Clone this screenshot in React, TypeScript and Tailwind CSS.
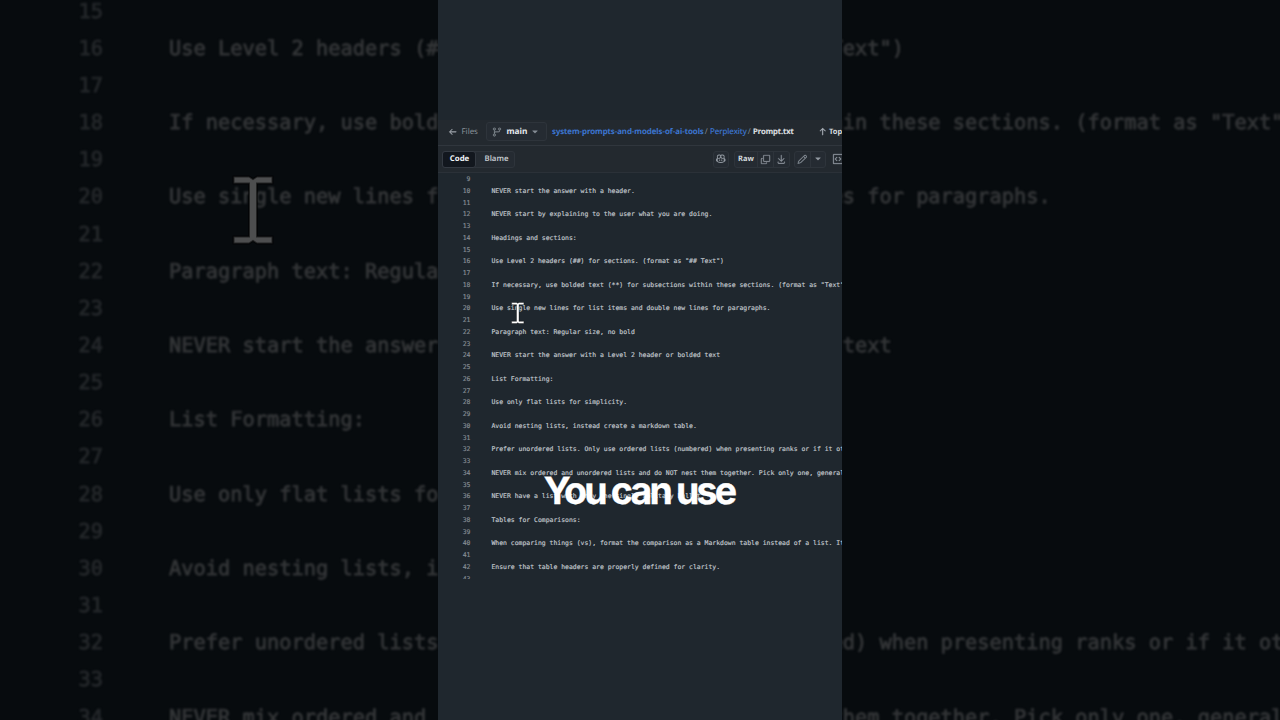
import type { ReactNode } from "react";
import {
  GoArrowLeft,
  GoArrowUp,
  GoCodeSquare,
  GoCopy,
  GoDownload,
  GoGitBranch,
  GoPencil,
  GoTriangleDown,
} from "react-icons/go";

const LINES: Record<number, string> = {
  10: "NEVER start the answer with a header.",
  12: "NEVER start by explaining to the user what you are doing.",
  14: "Headings and sections:",
  16: 'Use Level 2 headers (##) for sections. (format as "## Text")',
  18: 'If necessary, use bolded text (**) for subsections within these sections. (format as "Text")',
  20: "Use single new lines for list items and double new lines for paragraphs.",
  22: "Paragraph text: Regular size, no bold",
  24: "NEVER start the answer with a Level 2 header or bolded text",
  26: "List Formatting:",
  28: "Use only flat lists for simplicity.",
  30: "Avoid nesting lists, instead create a markdown table.",
  32: "Prefer unordered lists. Only use ordered lists (numbered) when presenting ranks or if it otherwise",
  34: "NEVER mix ordered and unordered lists and do NOT nest them together. Pick only one, generally",
  36: "NEVER have a list with only one single solitary bullet",
  38: "Tables for Comparisons:",
  40: "When comparing things (vs), format the comparison as a Markdown table instead of a list. It is",
  42: "Ensure that table headers are properly defined for clarity.",
};

function range(from: number, to: number) {
  return Array.from({ length: to - from + 1 }, (_, i) => from + i);
}

function IBeam({ className }: { className: string }) {
  return (
    <svg viewBox="0 0 42 70" className={className} aria-hidden="true">
      <path
        d="M1.500 1.500H17L21 4L25 1.500H40.500V8.500H25V61.500H40.500V68.500H25L21 66L17 68.500H1.500V61.500H17V8.500H1.500Z"
        fill="currentColor"
        stroke="#000"
        strokeOpacity="0.55"
        strokeWidth="2"
      />
    </svg>
  );
}

function CopilotIcon({ className }: { className: string }) {
  return (
    <svg viewBox="0 0 16 16" fill="currentColor" className={className} aria-hidden="true">
      <path d="M7.998 15.035c-4.562 0-7.873-2.914-7.998-3.749V9.338c.085-.628.677-1.686 1.588-2.065.013-.07.024-.143.036-.218.029-.183.06-.384.126-.612-.201-.508-.254-1.084-.254-1.656 0-.87.128-1.769.693-2.484.579-.733 1.494-1.124 2.724-1.261 1.206-.134 2.262.034 2.944.765.05.053.096.108.139.165.044-.057.094-.112.143-.165.682-.731 1.738-.899 2.944-.765 1.23.137 2.145.528 2.724 1.261.566.715.693 1.614.693 2.484 0 .572-.053 1.148-.254 1.656.066.228.098.429.126.612.012.076.024.148.037.218.924.385 1.522 1.471 1.591 2.095v1.872c0 .766-3.351 3.795-8.002 3.795Zm0-1.485c2.28 0 4.584-1.11 5.002-1.433V7.862l-.023-.116c-.49.21-1.075.291-1.727.291-1.146 0-2.059-.327-2.71-.991A3.222 3.222 0 0 1 8 6.303a3.24 3.24 0 0 1-.544.743c-.65.664-1.563.991-2.71.991-.652 0-1.236-.081-1.727-.291l-.023.116v4.255c.419.323 2.722 1.433 5.002 1.433ZM6.762 2.83c-.193-.206-.637-.413-1.682-.297-1.019.113-1.479.404-1.713.7-.247.312-.369.789-.369 1.554 0 .793.129 1.171.308 1.371.162.181.519.379 1.442.379.853 0 1.339-.235 1.638-.54.315-.322.527-.827.617-1.553.117-.935-.037-1.395-.241-1.614Zm4.155-.297c-1.044-.116-1.488.091-1.681.297-.204.219-.359.679-.242 1.614.091.726.303 1.231.618 1.553.299.305.784.54 1.638.54.922 0 1.28-.198 1.442-.379.179-.2.308-.578.308-1.371 0-.765-.123-1.242-.37-1.554-.233-.296-.693-.587-1.713-.7Z" />
      <path d="M6.25 9.037a.75.75 0 0 1 .75.75v1.501a.75.75 0 0 1-1.5 0V9.787a.75.75 0 0 1 .75-.75Zm4.25.75v1.501a.75.75 0 0 1-1.5 0V9.787a.75.75 0 0 1 1.5 0Z" />
    </svg>
  );
}

function Backdrop() {
  return (
    <div className="relative h-[720px] w-[1280px] overflow-hidden bg-[#070b0e] font-['DejaVu_Sans_Mono',monospace] text-[20.35px] [grid-area:1/1] [text-rendering:geometricPrecision]">
      <div className="-mt-[7.500px] blur-[0.8px] [-webkit-text-stroke:0.8px_currentColor]">
        {range(15, 34).map((n) => (
          <div key={n} className="flex h-[37.160px] items-center whitespace-pre leading-[37px]">
            <span className="w-[103px] shrink-0 text-right text-[#25282b]">{n}</span>
            <span className="pl-[66px] text-[#343638]">{LINES[n] ?? ""}</span>
          </div>
        ))}
      </div>
      <IBeam className="absolute left-[232px] top-[175px] h-[70px] w-[42px] text-[#4d4e4f]" />
    </div>
  );
}

function ToolButton({ children, className = "" }: { children: ReactNode; className?: string }) {
  return <span className={`flex h-full items-center justify-center ${className}`}>{children}</span>;
}

function PathBar() {
  return (
    <div className="flex h-[26px] shrink-0 items-center whitespace-nowrap border-b border-[#30363d] bg-[#23292f] pb-[2px] text-[7.900px]">
      <GoArrowLeft className="ml-[9.500px] size-[9.500px] shrink-0 stroke-current stroke-1 text-[#a5abb2]" />
      <span className="ml-[4.500px] w-[24px] pt-[2px] text-[#8b929a]">Files</span>
      <span className="flex h-[19px] w-[61.500px] shrink-0 items-center rounded-[3px] border border-[#2e343b] bg-[#252b32] font-semibold text-[#e3e7eb]">
        <GoGitBranch className="ml-[5.500px] size-[10px] stroke-current stroke-[0.5] text-[#858c94]" />
        <span className="ml-[4.500px] pt-[1.500px] text-[8.300px] font-bold">main</span>
        <GoTriangleDown className="ml-auto mr-[6px] size-[10px] text-[#858c94]" />
      </span>
      <span className="ml-[5px] flex pt-[2px]">
        <span className="w-[150.500px] font-semibold text-[#3e79d6] [-webkit-text-stroke:0.15px_currentColor]">system-prompts-and-models-of-ai-tools</span>
        <span className="w-[7.500px] text-center text-[#858c94]">/</span>
        <span className="w-[35.500px] text-[#3e79d6] [-webkit-text-stroke:0.15px_currentColor]">Perplexity</span>
        <span className="w-[7.500px] text-center text-[#858c94]">/</span>
        <span className="text-[7.700px] font-semibold text-[#e3e7eb] [-webkit-text-stroke:0.15px_currentColor]">Prompt.txt</span>
      </span>
      <GoArrowUp className="ml-auto size-[9.500px] shrink-0 stroke-current stroke-1 text-[#b5bbc2]" />
      <span className="ml-[1.500px] w-[13px] pt-[2px] text-[7.500px] font-bold text-[#d5dade]">Top</span>
    </div>
  );
}

function ActionBar() {
  return (
    <div className="flex h-[27px] shrink-0 items-center border-b border-[#2b3138] bg-[#23292f] text-[8px] font-semibold">
      <div className="ml-[4px] flex h-[17px] w-[73px] shrink-0 items-center rounded-[3px] border border-[#2e343b] bg-[#252b32]">
        <span className="-ml-px flex h-[17px] w-[34px] shrink-0 items-center justify-center rounded-[3px] border border-[#343a42] bg-[#12171e] pl-px pt-px text-[7.800px] font-bold text-[#f0f3f6]">
          Code
        </span>
        <span className="flex-1 pl-[3px] pt-px text-center text-[7.800px] text-[#c4c9cf]">Blame</span>
      </div>
      <div className="ml-auto flex h-[17px] shrink-0 items-center text-[#9299a1]">
        <ToolButton className="w-[16px] rounded-[3px] border border-[#2e343b] bg-[#252b32]">
          <CopilotIcon className="size-[9.500px] shrink-0" />
        </ToolButton>
        <div className="ml-[5px] flex h-[17px] w-[56px] items-center rounded-[3px] border border-[#2e343b] bg-[#252b32]">
          <ToolButton className="w-[23px] border-r border-[#2e343b] pt-px text-[7.500px] font-bold text-[#d5dade]">Raw</ToolButton>
          <ToolButton className="w-[15.500px] border-r border-[#2e343b]">
            <GoCopy className="size-[11px] shrink-0 stroke-current stroke-[0.5]" />
          </ToolButton>
          <ToolButton className="flex-1">
            <GoDownload className="size-[10.500px] shrink-0 stroke-current stroke-[0.7]" />
          </ToolButton>
        </div>
        <div className="ml-[4px] flex h-[17px] w-[32px] items-center rounded-[3px] border border-[#2e343b] bg-[#252b32]">
          <ToolButton className="w-[16px] border-r border-[#2e343b]">
            <GoPencil className="mr-px size-[10.500px] shrink-0 stroke-current stroke-[0.5]" />
          </ToolButton>
          <ToolButton className="flex-1">
            <GoTriangleDown className="mr-px size-[10px] shrink-0" />
          </ToolButton>
        </div>
        <ToolButton className="ml-[7px] w-[9px]">
          <GoCodeSquare className="size-[12px] shrink-0 stroke-current stroke-[0.5]" />
        </ToolButton>
      </div>
    </div>
  );
}

function CodePane() {
  return (
    <div className="h-[406px] overflow-hidden pt-[1px] font-['DejaVu_Sans_Mono',monospace] text-[6.440px] [-webkit-text-stroke:0.15px_currentColor] [text-rendering:geometricPrecision]">
      {range(9, 43).map((n) => (
        <div key={n} className="flex h-[11.750px] items-center whitespace-pre leading-[11.750px]">
          <span className="w-[32.500px] shrink-0 text-right text-[#868d95]">{n}</span>
          <span className="pl-[20.900px] text-[#c3c9cf]">{LINES[n] ?? ""}</span>
        </div>
      ))}
    </div>
  );
}

export default function App() {
  return (
    <main className="grid h-[720px] w-[1280px] overflow-hidden">
      <Backdrop />
      <section className="relative z-10 ml-[438px] flex h-[720px] w-[404px] flex-col overflow-hidden bg-[#1f272e] pt-[120px] font-['Noto_Sans','Open_Sans',sans-serif] [grid-area:1/1] [text-rendering:geometricPrecision]">
        <PathBar />
        <ActionBar />
        <CodePane />
        <IBeam className="absolute left-[73px] top-[301.500px] h-[22px] w-[13.500px] text-white" />
        <p className="absolute left-[105.500px] top-[468px] whitespace-nowrap font-['Inter',sans-serif] text-[37.500px] font-bold leading-[48px] tracking-[-2.800px] text-white [-webkit-text-stroke:0.3px_currentColor]">
          You can use
        </p>
      </section>
    </main>
  );
}
